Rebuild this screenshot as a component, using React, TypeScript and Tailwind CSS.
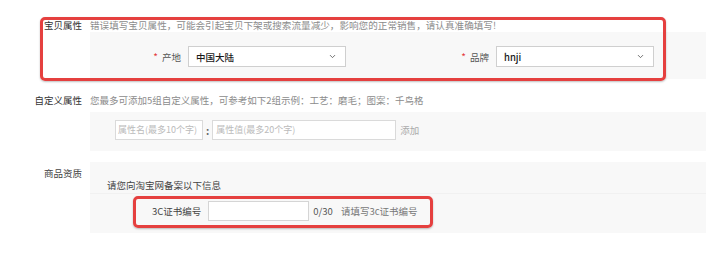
import React from "react";
import { ChevronDown } from "lucide-react";

const font = { fontFamily: '"Noto Sans CJK SC", "Liberation Sans", sans-serif' };

function SelectField({ label, value }: { label: string; value: string }) {
  return (
    <div className="flex items-center justify-end pr-[52px]">
      <span className="text-[#e4393c] text-[10px] mr-[4px] leading-[12px]">*</span>
      <span className="text-[#555] text-[9.5px] leading-[12px]">{label}</span>
      <div className="ml-[7px] flex h-[21px] w-[158px] items-center justify-between border border-[#cfcfcf] bg-white pl-[7px] pr-[8px]">
        <span className="text-[#1a1a1a] text-[9.5px] font-medium leading-[12px]">{value}</span>
        <ChevronDown size={9} strokeWidth={2.2} className="text-[#555]" />
      </div>
    </div>
  );
}

export default function App() {
  return (
    <div className="relative h-[256px] w-[722px] overflow-hidden bg-white pt-[19px]" style={font}>
      {/* Section 1 */}
      <div className="grid grid-cols-[82px_616px] gap-x-[8px]">
        <div className="text-right text-[9.5px] leading-[12px] text-[#333]">宝贝属性</div>
        <div>
          <div className="whitespace-nowrap text-[9.6px] leading-[12px] text-[#8c8c8c]">
            错误填写宝贝属性，可能会引起宝贝下架或搜索流量减少，影响您的正常销售，请认真准确填写!
          </div>
          <div className="mt-[1px] grid h-[47px] grid-cols-2 items-start bg-[#f8f8f8] pt-[14px]">
            <SelectField label="产地" value="中国大陆" />
            <SelectField label="品牌" value="hnji" />
          </div>
        </div>
      </div>

      {/* Section 2 */}
      <div className="mt-[15px] grid grid-cols-[82px_616px] gap-x-[8px]">
        <div className="text-right text-[9.5px] leading-[12px] text-[#333]">自定义属性</div>
        <div>
          <div className="whitespace-nowrap text-[9.5px] leading-[12px] text-[#8c8c8c]">
            您最多可添加5组自定义属性，可参考如下2组示例：工艺：磨毛；图案：千鸟格
          </div>
          <div className="mt-[6px] flex h-[39px] items-start bg-[#f8f8f8] pl-[25px] pt-[8px]">
            <div className="flex h-[20px] w-[88px] items-center overflow-hidden whitespace-nowrap border border-[#dadada] bg-white pl-[2px] text-[9px] text-[#bbb]">
              属性名(最多10个字)
            </div>
            <span className="mx-[3px] flex h-[20px] items-center text-[10px] font-bold text-[#666]">:</span>
            <div className="flex h-[20px] w-[184px] items-center whitespace-nowrap border border-[#dadada] bg-white pl-[3px] text-[9px] text-[#bbb]">
              属性值(最多20个字)
            </div>
            <span className="ml-[4px] flex h-[20px] items-center text-[9.5px] text-[#aaa]">添加</span>
          </div>
        </div>
      </div>

      {/* Section 3 */}
      <div className="mt-[11px] grid grid-cols-[82px_616px] gap-x-[8px]">
        <div className="pt-[5px] text-right text-[9.5px] leading-[12px] text-[#444]">商品资质</div>
        <div className="h-[71px] bg-[#f8f8f8]">
          <div className="h-[32px] border-b border-[#f1f1f1] pl-[17px] pt-[17px] text-[9.5px] leading-[12px] text-[#444]">
            请您向淘宝网备案以下信息
          </div>
          <div className="flex items-center pt-[7px] pl-[62px]">
            <span className="text-[9.5px] leading-[12px] text-[#444]">3C证书编号</span>
            <div className="ml-[7px] h-[20px] w-[101px] border border-[#d5d5d5] bg-white" />
            <span className="ml-[4px] text-[9.5px] leading-[12px] text-[#555]">0/30</span>
            <span className="ml-[8px] text-[9.5px] leading-[12px] text-[#777]">请填写3c证书编号</span>
          </div>
        </div>
      </div>

      {/* Red highlight annotations */}
      <div className="pointer-events-none absolute left-[40px] top-[17px] h-[64px] w-[626px] rounded-[5px] border-[3px] border-[#e5403f] shadow-[0_1px_2px_rgba(0,0,0,0.25)]" />
      <div className="pointer-events-none absolute left-[133px] top-[196px] h-[32px] w-[300px] rounded-[5px] border-[3px] border-[#e5403f] shadow-[0_1px_2px_rgba(0,0,0,0.25)]" />
    </div>
  );
}
